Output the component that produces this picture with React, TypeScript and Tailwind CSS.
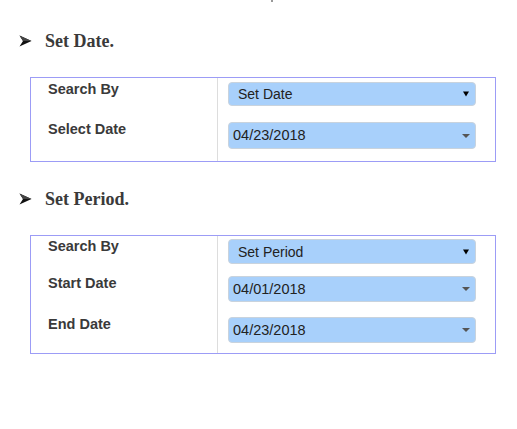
import React from 'react'

type Field = {
  label: string
  value: string
  kind: 'select' | 'date'
  rowClass: string
  height: string
}

const dateFields: Field[] = [
  { label: 'Search By', value: 'Set Date', kind: 'select', rowClass: 'pt-[4px]', height: 'h-[24px]' },
  { label: 'Select Date', value: '04/23/2018', kind: 'date', rowClass: 'pt-[16px] pb-[12px]', height: 'h-[27px]' },
]

const periodFields: Field[] = [
  { label: 'Search By', value: 'Set Period', kind: 'select', rowClass: 'pt-[3px]', height: 'h-[25px]' },
  { label: 'Start Date', value: '04/01/2018', kind: 'date', rowClass: 'pt-[12px]', height: 'h-[26px]' },
  { label: 'End Date', value: '04/23/2018', kind: 'date', rowClass: 'pt-[15px] pb-[10px]', height: 'h-[26px]' },
]

function Arrowhead() {
  return (
    <svg width="13" height="12" viewBox="0 0 13 12" className="shrink-0">
      <path d="M0.5 0.5 L12.5 6 L0.5 11.5 L4 6 Z" fill="#111" />
      <path d="M0.5 0.5 L12.5 6 L4 6 Z" fill="#444" />
    </svg>
  )
}

function Heading({ title }: { title: string }) {
  return (
    <div className="flex items-center h-[18px] pl-[19px]">
      <Arrowhead />
      <span className="ml-[13px] font-['Liberation_Serif',serif] font-bold text-[18px] leading-[18px] text-[#3a3a3a]">
        {title}
      </span>
    </div>
  )
}

function Control({ field }: { field: Field }) {
  const isSelect = field.kind === 'select'
  return (
    <div
      className={`flex items-center justify-between rounded-[4px] border border-[#c9d3dd] bg-[#a8d0fb] text-[#222] ${field.height} ${
        isSelect ? 'pl-[9px] pr-[6px] text-[14px]' : 'pl-[4px] pr-[5px] text-[14.5px]'
      }`}
    >
      <span className="leading-none">{field.value}</span>
      {isSelect ? (
        <svg width="6" height="6" viewBox="0 0 6 6">
          <path d="M0 0.5 H6 L3 5.5 Z" fill="#000" />
        </svg>
      ) : (
        <svg width="8" height="4" viewBox="0 0 8 4">
          <path d="M0 0 H8 L4 4 Z" fill="#555" />
        </svg>
      )}
    </div>
  )
}

function FieldBox({ fields }: { fields: Field[] }) {
  return (
    <div className="ml-[30px] w-[466px] border-[1px] border-solid border-[color:#9c9cf6]">
      {fields.map((f) => (
        <div key={f.label} className="flex">
          <div className={`w-[187px] border-r border-[#dddddd] pl-[17px] ${f.rowClass}`}>
            <div className="-mt-px text-[14.5px] leading-[16px] font-bold text-[#3a3a3a]">{f.label}</div>
          </div>
          <div className={`flex-1 pl-[10px] pr-[19px] ${f.rowClass}`}>
            <Control field={f} />
          </div>
        </div>
      ))}
    </div>
  )
}

export default function App() {
  return (
    <div className="w-[517px] h-[429px] bg-white font-['Liberation_Sans',Arial,sans-serif] overflow-hidden">
      <div className="h-[32px] pl-[271px]">
        <div className="w-[2px] h-[2px] bg-[#999]" />
      </div>
      <Heading title="Set Date." />
      <div className="h-[27px]" />
      <FieldBox fields={dateFields} />
      <div className="h-[28px]" />
      <Heading title="Set Period." />
      <div className="h-[27px]" />
      <FieldBox fields={periodFields} />
    </div>
  )
}
